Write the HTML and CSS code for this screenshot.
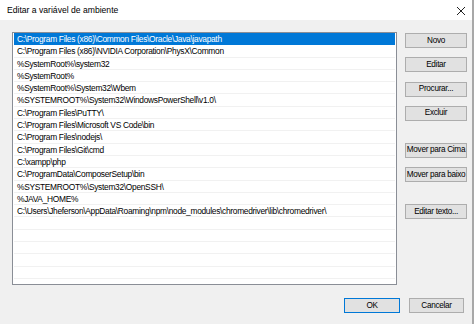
FILE: index.html
```html
<!DOCTYPE html>
<html>
<head>
<meta charset="utf-8">
<link rel="stylesheet" href="styles.css">
</head>
<body>
<div class="window">
  <div class="titlebar">
    <span class="title">Editar a variável de ambiente</span>
    <svg class="close" width="10" height="10" viewBox="0 0 10 10"><path d="M1 1 L9 9 M9 1 L1 9" stroke="#222" stroke-width="1" fill="none"/></svg>
  </div>
  <div class="content">
    <div class="main">
      <div class="list">
        <div class="row selected">C:\Program Files (x86)\Common Files\Oracle\Java\javapath</div>
        <div class="row">C:\Program Files (x86)\NVIDIA Corporation\PhysX\Common</div>
        <div class="row">%SystemRoot%\system32</div>
        <div class="row">%SystemRoot%</div>
        <div class="row">%SystemRoot%\System32\Wbem</div>
        <div class="row">%SYSTEMROOT%\System32\WindowsPowerShell\v1.0\</div>
        <div class="row">C:\Program Files\PuTTY\</div>
        <div class="row">C:\Program Files\Microsoft VS Code\bin</div>
        <div class="row">C:\Program Files\nodejs\</div>
        <div class="row">C:\Program Files\Git\cmd</div>
        <div class="row">C:\xampp\php</div>
        <div class="row">C:\ProgramData\ComposerSetup\bin</div>
        <div class="row">%SYSTEMROOT%\System32\OpenSSH\</div>
        <div class="row">%JAVA_HOME%</div>
        <div class="row">C:\Users\Jheferson\AppData\Roaming\npm\node_modules\chromedriver\lib\chromedriver\</div>
        <div class="row"></div>
        <div class="row"></div>
        <div class="row"></div>
        <div class="row"></div>
        <div class="row"></div>
      </div>
      <div class="side">
        <button class="btn">Novo</button>
        <button class="btn">Editar</button>
        <button class="btn">Procurar...</button>
        <button class="btn">Excluir</button>
        <button class="btn sep">Mover para Cima</button>
        <button class="btn">Mover para baixo</button>
        <button class="btn sep">Editar texto...</button>
      </div>
    </div>
    <div class="footer">
      <button class="btn fbtn default">OK</button>
      <button class="btn fbtn">Cancelar</button>
    </div>
  </div>
</div>
</body>
</html>
```
FILE: styles.css
```css
* { box-sizing: border-box; }
html, body { margin: 0; padding: 0; background: #ffffff; }
body {
  font-family: "Liberation Sans", Arial, sans-serif;
  font-size: 8.4px;
  color: #000;
}
.window {
  width: 474px;
  height: 324px;
  display: flex;
  flex-direction: column;
  border-right: 2px solid #a8a8a8;
  background: #f0f0f0;
}
.titlebar {
  height: 20px;
  background: #ffffff;
  display: flex;
  align-items: center;
  justify-content: space-between;
  padding: 0 6px 0 7px;
}
.title { font-size: 8.6px; line-height: 1; margin-top: 1px; }
.close { margin-top: 1px; }
.content {
  flex: 1;
  padding: 12px 5px 0 12px;
  display: flex;
  flex-direction: column;
}
.main { display: flex; gap: 8px; }
.list {
  width: 385px;
  height: 253px;
  border: 1px solid #8a8e96;
  background: #ffffff;
  padding: 0 1px;
  overflow: hidden;
  letter-spacing: -0.3px;
}
.row {
  height: 12.3px;
  line-height: 12px;
  padding-left: 3px;
  border-bottom: 1px solid #f1f1f1;
  white-space: nowrap;
  overflow: hidden;
}
.row.selected {
  background: #0078d7;
  color: #ffffff;
  border-bottom-color: #0078d7;
}
.side {
  width: 62px;
  display: flex;
  flex-direction: column;
  gap: 9.3px;
  padding-top: 1px;
}
.btn {
  height: 15px;
  width: 62px;
  padding: 0;
  border: 1px solid #adadad;
  background: #e1e1e1;
  font-family: inherit;
  font-size: 8.2px;
  letter-spacing: -0.3px;
  color: #000;
  line-height: 12px;
  white-space: nowrap;
  overflow: hidden;
}
.side .sep { margin-top: 12.7px; }
.footer {
  display: flex;
  justify-content: flex-end;
  gap: 9px;
  margin-top: 13px;
  padding-right: 3px;
}
.fbtn { width: 55px; }
.fbtn.default { width: 56px; border-color: #0078d7; }
```
